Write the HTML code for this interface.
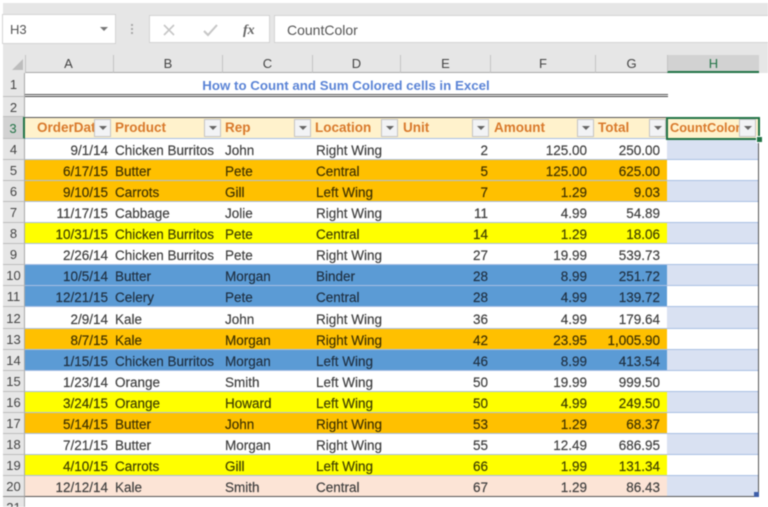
<!DOCTYPE html>
<html><head><meta charset="utf-8">
<style>
html,body{margin:0;padding:0;width:768px;height:507px;overflow:hidden;background:#fff}
#p{position:relative;width:768px;height:507px;overflow:hidden;font-family:"Liberation Sans",sans-serif;color:#3c3c3c;filter:blur(.45px);background:#fff}
.a{position:absolute}
.hd{position:absolute;top:55px;height:17px;border-left:1px solid #c4c4c4;border-bottom:1px solid #a8a8a8;background:#e6e6e6;text-align:center;font-size:13px;line-height:17px;color:#444}
.rh{position:absolute;left:3px;width:22px;background:#e6e6e6;border-bottom:1px solid #bdbdbd;box-sizing:border-box;font-size:13px;text-align:center;color:#444;border-right:1px solid #a8a8a8}
table{position:absolute;left:25px;top:139px;border-collapse:collapse;table-layout:fixed;width:734px;font-size:13.5px}
td{height:16px;padding:4px 3px 0 2px;border-bottom:1px solid #a9bfe3;white-space:nowrap;overflow:hidden;line-height:16px;box-sizing:content-box;-webkit-text-stroke:.15px currentColor}
tr.x td{height:17px}
td.r{text-align:right;padding-right:5px}
td:nth-child(3){padding-left:3px}
td:nth-child(4){padding-left:4px}
td:nth-child(5).r{padding-right:2px}
td:nth-child(6).r{padding-right:8px}
td:nth-child(7).r{padding-right:7px}
td.h{background:#d9e1f2}
td.n{background:#fff}
.o td{background:#ffc000;color:#3d3000}
.y td{background:#ff0;color:#3c3c00}
.b td{background:#5b9bd5;color:#1f2f40}
.p td{background:#fce4d6}
.o td.h,.y td.h,.b td.h,.p td.h{background:#d9e1f2}
.o td.n,.y td.n,.b td.n,.p td.n{background:#fff}
.th{position:absolute;top:118px;height:20px;line-height:20px;font-size:13.5px;font-weight:bold;color:#d9792b;white-space:nowrap;overflow:hidden}
.f{position:absolute;top:119px;width:17px;height:18px;background:#f2f3f5;border:1px solid #c4c4c4;box-sizing:border-box}
.f:after{content:"";position:absolute;left:4px;top:6px;border-left:4px solid transparent;border-right:4px solid transparent;border-top:4px solid #666}
</style></head><body><div id="p">
<div class="a" style="left:3px;top:3px;width:765px;height:52px;background:#e6e6e6"></div>
<div class="a" style="left:3px;top:55px;width:765px;height:18px;background:#e6e6e6"></div>
<div class="a" style="left:3px;top:15px;width:112px;height:28px;background:#fff;box-shadow:0 0 0 1px #d4d4d4"></div>
<div class="a" style="left:10px;top:15px;height:28px;line-height:29px;font-size:13px;color:#555">H3</div>
<div class="a" style="left:100px;top:27px;border-left:4px solid transparent;border-right:4px solid transparent;border-top:4px solid #777"></div>
<div class="a" style="left:131px;top:24px;width:2px;height:11px;background:repeating-linear-gradient(#aaa 0 2px,transparent 2px 4px)"></div>
<div class="a" style="left:150px;top:16px;width:119px;height:26px;background:#fff;box-shadow:0 0 0 1px #d4d4d4"></div>
<svg class="a" style="left:150px;top:16px" width="119" height="26" viewBox="0 0 119 26"><path d="M14 9l10 10M24 9L14 19" stroke="#c6c6c6" stroke-width="1.6" fill="none"/><path d="M54 15l4 4 9-10" stroke="#c6c6c6" stroke-width="2" fill="none"/><text x="93" y="18" font-family="Liberation Serif,serif" font-style="italic" font-weight="bold" font-size="14" fill="#666">fx</text></svg>
<div class="a" style="left:275px;top:16px;width:493px;height:26px;background:#fff;box-shadow:0 0 0 1px #d4d4d4"></div>
<div class="a" style="left:287px;top:16px;height:27px;line-height:28px;font-size:14px;color:#555">CountColor</div>

<svg class="a" style="left:10px;top:58px" width="14" height="13"><path d="M13 1V12H2z" fill="#bdbdbd"/></svg>
<div class="hd" style="left:25px;width:87px;text-indent:-2px">A</div>
<div class="hd" style="left:113px;width:108px">B</div>
<div class="hd" style="left:222px;width:89px">C</div>
<div class="hd" style="left:312px;width:87px">D</div>
<div class="hd" style="left:400px;width:89px">E</div>
<div class="hd" style="left:490px;width:104px">F</div>
<div class="hd" style="left:595px;width:71px">G</div>
<div class="hd" style="left:667px;width:91px;background:#d2d2d2;border-bottom:2px solid #217346;height:16px;color:#217346">H</div>

<div class="rh" style="top:73px;height:24px;line-height:23px">1</div>
<div class="rh" style="top:97px;height:20px;line-height:21px">2</div>
<div class="rh" style="top:117px;height:22px;line-height:23px;background:#d2d2d2;color:#217346;border-right:2px solid #217346">3</div>
<div class="rh" style="top:139px;height:21px;line-height:22px">4</div>
<div class="rh" style="top:160px;height:21px;line-height:22px">5</div>
<div class="rh" style="top:181px;height:21px;line-height:22px">6</div>
<div class="rh" style="top:202px;height:21px;line-height:22px">7</div>
<div class="rh" style="top:223px;height:21px;line-height:22px">8</div>
<div class="rh" style="top:244px;height:21px;line-height:22px">9</div>
<div class="rh" style="top:265px;height:21px;line-height:22px">10</div>
<div class="rh" style="top:286px;height:21px;line-height:22px">11</div>
<div class="rh" style="top:307px;height:22px;line-height:23px">12</div>
<div class="rh" style="top:329px;height:21px;line-height:22px">13</div>
<div class="rh" style="top:350px;height:21px;line-height:22px">14</div>
<div class="rh" style="top:371px;height:21px;line-height:22px">15</div>
<div class="rh" style="top:392px;height:21px;line-height:22px">16</div>
<div class="rh" style="top:413px;height:21px;line-height:22px">17</div>
<div class="rh" style="top:434px;height:21px;line-height:22px">18</div>
<div class="rh" style="top:455px;height:21px;line-height:22px">19</div>
<div class="rh" style="top:476px;height:21px;line-height:22px;border-bottom:1px solid #888">20</div>
<div class="rh" style="top:497px;height:10px;line-height:22px;overflow:hidden;border-bottom:0">21</div>

<div class="a" style="left:25px;top:74px;width:642px;height:21px;line-height:24px;text-align:center;font-size:13.3px;font-weight:bold;color:#5b84d6">How to Count and Sum Colored cells in Excel</div>
<div class="a" style="left:25px;top:94px;width:643px;height:3px;border-top:1px solid #555;border-bottom:1px solid #444;box-sizing:border-box"></div>

<div class="a" style="left:25px;top:117px;width:642px;height:22px;background:#fff2cc;border-top:1px solid #555;border-bottom:1px solid #a9bfe3;box-sizing:border-box"></div>
<div class="a" style="left:667px;top:117px;width:92px;height:22px;background:#fff2cc"></div>
<div class="th" style="left:37px;width:57px">OrderDat</div><div class="f" style="left:94px"></div>
<div class="th" style="left:115px">Product</div><div class="f" style="left:204px"></div>
<div class="th" style="left:225px">Rep</div><div class="f" style="left:294px"></div>
<div class="th" style="left:315px">Location</div><div class="f" style="left:381px"></div>
<div class="th" style="left:403px">Unit</div><div class="f" style="left:472px"></div>
<div class="th" style="left:494px">Amount</div><div class="f" style="left:577px"></div>
<div class="th" style="left:598px">Total</div><div class="f" style="left:649px"></div>
<div class="th" style="left:670px;width:70px;font-size:12.8px">CountColor</div><div class="f" style="left:739px"></div>

<table>
<colgroup><col style="width:88px"><col style="width:109px"><col style="width:90px"><col style="width:88px"><col style="width:90px"><col style="width:105px"><col style="width:72px"><col style="width:92px"></colgroup>
<tr><td class="r">9/1/14</td><td>Chicken Burritos</td><td>John</td><td>Right Wing</td><td class="r">2</td><td class="r">125.00</td><td class="r">250.00</td><td class="h"></td></tr>
<tr class="o"><td class="r">6/17/15</td><td>Butter</td><td>Pete</td><td>Central</td><td class="r">5</td><td class="r">125.00</td><td class="r">625.00</td><td class="n"></td></tr>
<tr class="o"><td class="r">9/10/15</td><td>Carrots</td><td>Gill</td><td>Left Wing</td><td class="r">7</td><td class="r">1.29</td><td class="r">9.03</td><td class="h"></td></tr>
<tr><td class="r">11/17/15</td><td>Cabbage</td><td>Jolie</td><td>Right Wing</td><td class="r">11</td><td class="r">4.99</td><td class="r">54.89</td><td class="n"></td></tr>
<tr class="y"><td class="r">10/31/15</td><td>Chicken Burritos</td><td>Pete</td><td>Central</td><td class="r">14</td><td class="r">1.29</td><td class="r">18.06</td><td class="h"></td></tr>
<tr><td class="r">2/26/14</td><td>Chicken Burritos</td><td>Pete</td><td>Right Wing</td><td class="r">27</td><td class="r">19.99</td><td class="r">539.73</td><td class="n"></td></tr>
<tr class="b"><td class="r">10/5/14</td><td>Butter</td><td>Morgan</td><td>Binder</td><td class="r">28</td><td class="r">8.99</td><td class="r">251.72</td><td class="h"></td></tr>
<tr class="b"><td class="r">12/21/15</td><td>Celery</td><td>Pete</td><td>Central</td><td class="r">28</td><td class="r">4.99</td><td class="r">139.72</td><td class="n"></td></tr>
<tr class="x"><td class="r">2/9/14</td><td>Kale</td><td>John</td><td>Right Wing</td><td class="r">36</td><td class="r">4.99</td><td class="r">179.64</td><td class="h"></td></tr>
<tr class="o"><td class="r">8/7/15</td><td>Kale</td><td>Morgan</td><td>Right Wing</td><td class="r">42</td><td class="r">23.95</td><td class="r">1,005.90</td><td class="n"></td></tr>
<tr class="b"><td class="r">1/15/15</td><td>Chicken Burritos</td><td>Morgan</td><td>Left Wing</td><td class="r">46</td><td class="r">8.99</td><td class="r">413.54</td><td class="h"></td></tr>
<tr><td class="r">1/23/14</td><td>Orange</td><td>Smith</td><td>Left Wing</td><td class="r">50</td><td class="r">19.99</td><td class="r">999.50</td><td class="n"></td></tr>
<tr class="y"><td class="r">3/24/15</td><td>Orange</td><td>Howard</td><td>Left Wing</td><td class="r">50</td><td class="r">4.99</td><td class="r">249.50</td><td class="h"></td></tr>
<tr class="o"><td class="r">5/14/15</td><td>Butter</td><td>John</td><td>Right Wing</td><td class="r">53</td><td class="r">1.29</td><td class="r">68.37</td><td class="n"></td></tr>
<tr><td class="r">7/21/15</td><td>Butter</td><td>Morgan</td><td>Right Wing</td><td class="r">55</td><td class="r">12.49</td><td class="r">686.95</td><td class="h"></td></tr>
<tr class="y"><td class="r">4/10/15</td><td>Carrots</td><td>Gill</td><td>Left Wing</td><td class="r">66</td><td class="r">1.99</td><td class="r">131.34</td><td class="n"></td></tr>
<tr class="p"><td class="r">12/12/14</td><td>Kale</td><td>Smith</td><td>Central</td><td class="r">67</td><td class="r">1.29</td><td class="r">86.43</td><td class="h"></td></tr>
</table>
<div class="a" style="left:25px;top:496px;width:734px;height:1px;background:#555"></div>
<div class="a" style="left:758px;top:139px;width:1px;height:358px;background:#555"></div>
<div class="a" style="left:754px;top:492px;width:5px;height:5px;background:#3f5fa8"></div>
<div class="a" style="left:666px;top:117px;width:94px;height:23px;border:2px solid #217346;box-sizing:border-box"></div>
<div class="a" style="left:757px;top:137px;width:5px;height:5px;background:#217346;border:1px solid #fff;box-sizing:content-box;margin:-1px"></div>
</div></body></html>
